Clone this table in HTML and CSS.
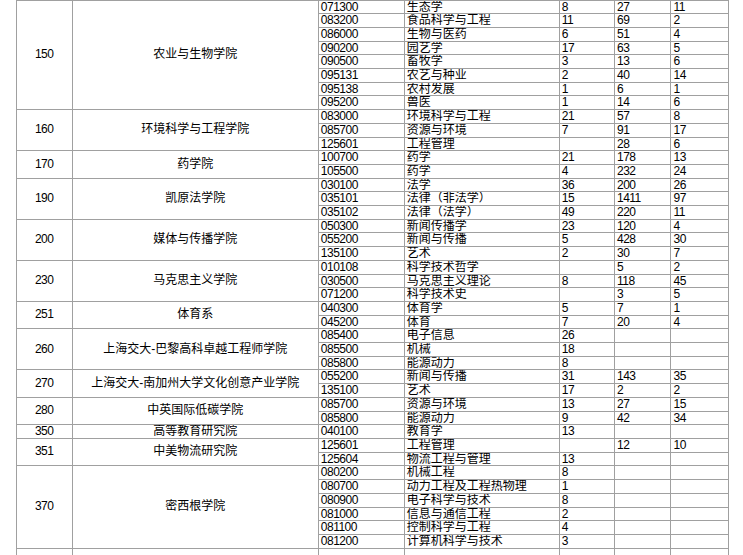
FILE: index.html
```html
<!DOCTYPE html>
<html lang="zh-CN">
<head>
<meta charset="utf-8">
<title>招生专业目录</title>
<link rel="stylesheet" href="styles.css">
</head>
<body>
<table class="sheet">
  <colgroup>
    <col class="c-code"><col class="c-school"><col class="c-major"><col class="c-name"><col class="c-num"><col class="c-num2"><col class="c-num3">
  </colgroup>
  <tbody>
    <tr><td class="grp" rowspan="8">150</td><td class="school" rowspan="8">农业与生物学院</td><td class="n">071300</td><td>生态学</td><td class="n">8</td><td class="n">27</td><td class="n">11</td></tr>
    <tr><td class="n">083200</td><td>食品科学与工程</td><td class="n">11</td><td class="n">69</td><td class="n">2</td></tr>
    <tr><td class="n">086000</td><td>生物与医药</td><td class="n">6</td><td class="n">51</td><td class="n">4</td></tr>
    <tr><td class="n">090200</td><td>园艺学</td><td class="n">17</td><td class="n">63</td><td class="n">5</td></tr>
    <tr><td class="n">090500</td><td>畜牧学</td><td class="n">3</td><td class="n">13</td><td class="n">6</td></tr>
    <tr><td class="n">095131</td><td>农艺与种业</td><td class="n">2</td><td class="n">40</td><td class="n">14</td></tr>
    <tr><td class="n">095138</td><td>农村发展</td><td class="n">1</td><td class="n">6</td><td class="n">1</td></tr>
    <tr><td class="n">095200</td><td>兽医</td><td class="n">1</td><td class="n">14</td><td class="n">6</td></tr>

    <tr><td class="grp" rowspan="3">160</td><td class="school" rowspan="3">环境科学与工程学院</td><td class="n">083000</td><td>环境科学与工程</td><td class="n">21</td><td class="n">57</td><td class="n">8</td></tr>
    <tr><td class="n">085700</td><td>资源与环境</td><td class="n">7</td><td class="n">91</td><td class="n">17</td></tr>
    <tr><td class="n">125601</td><td>工程管理</td><td class="n"></td><td class="n">28</td><td class="n">6</td></tr>

    <tr><td class="grp" rowspan="2">170</td><td class="school" rowspan="2">药学院</td><td class="n">100700</td><td>药学</td><td class="n">21</td><td class="n">178</td><td class="n">13</td></tr>
    <tr><td class="n">105500</td><td>药学</td><td class="n">4</td><td class="n">232</td><td class="n">24</td></tr>

    <tr><td class="grp" rowspan="3">190</td><td class="school" rowspan="3">凯原法学院</td><td class="n">030100</td><td>法学</td><td class="n">36</td><td class="n">200</td><td class="n">26</td></tr>
    <tr><td class="n">035101</td><td>法律（非法学）</td><td class="n">15</td><td class="n">1411</td><td class="n">97</td></tr>
    <tr><td class="n">035102</td><td>法律（法学）</td><td class="n">49</td><td class="n">220</td><td class="n">11</td></tr>

    <tr><td class="grp" rowspan="3">200</td><td class="school" rowspan="3">媒体与传播学院</td><td class="n">050300</td><td>新闻传播学</td><td class="n">23</td><td class="n">120</td><td class="n">4</td></tr>
    <tr><td class="n">055200</td><td>新闻与传播</td><td class="n">5</td><td class="n">428</td><td class="n">30</td></tr>
    <tr><td class="n">135100</td><td>艺术</td><td class="n">2</td><td class="n">30</td><td class="n">7</td></tr>

    <tr><td class="grp" rowspan="3">230</td><td class="school" rowspan="3">马克思主义学院</td><td class="n">010108</td><td>科学技术哲学</td><td class="n"></td><td class="n">5</td><td class="n">2</td></tr>
    <tr><td class="n">030500</td><td>马克思主义理论</td><td class="n">8</td><td class="n">118</td><td class="n">45</td></tr>
    <tr><td class="n">071200</td><td>科学技术史</td><td class="n"></td><td class="n">3</td><td class="n">5</td></tr>

    <tr><td class="grp" rowspan="2">251</td><td class="school" rowspan="2">体育系</td><td class="n">040300</td><td>体育学</td><td class="n">5</td><td class="n">7</td><td class="n">1</td></tr>
    <tr><td class="n">045200</td><td>体育</td><td class="n">7</td><td class="n">20</td><td class="n">4</td></tr>

    <tr><td class="grp" rowspan="3">260</td><td class="school" rowspan="3">上海交大-巴黎高科卓越工程师学院</td><td class="n">085400</td><td>电子信息</td><td class="n">26</td><td class="n"></td><td class="n"></td></tr>
    <tr><td class="n">085500</td><td>机械</td><td class="n">18</td><td class="n"></td><td class="n"></td></tr>
    <tr><td class="n">085800</td><td>能源动力</td><td class="n">8</td><td class="n"></td><td class="n"></td></tr>

    <tr><td class="grp" rowspan="2">270</td><td class="school" rowspan="2">上海交大-南加州大学文化创意产业学院</td><td class="n">055200</td><td>新闻与传播</td><td class="n">31</td><td class="n">143</td><td class="n">35</td></tr>
    <tr><td class="n">135100</td><td>艺术</td><td class="n">17</td><td class="n">2</td><td class="n">2</td></tr>

    <tr><td class="grp" rowspan="2">280</td><td class="school" rowspan="2">中英国际低碳学院</td><td class="n">085700</td><td>资源与环境</td><td class="n">13</td><td class="n">27</td><td class="n">15</td></tr>
    <tr><td class="n">085800</td><td>能源动力</td><td class="n">9</td><td class="n">42</td><td class="n">34</td></tr>

    <tr><td class="grp">350</td><td class="school">高等教育研究院</td><td class="n">040100</td><td>教育学</td><td class="n">13</td><td class="n"></td><td class="n"></td></tr>

    <tr><td class="grp" rowspan="2">351</td><td class="school" rowspan="2">中美物流研究院</td><td class="n">125601</td><td>工程管理</td><td class="n"></td><td class="n">12</td><td class="n">10</td></tr>
    <tr><td class="n">125604</td><td>物流工程与管理</td><td class="n">13</td><td class="n"></td><td class="n"></td></tr>

    <tr><td class="grp" rowspan="6">370</td><td class="school" rowspan="6">密西根学院</td><td class="n">080200</td><td>机械工程</td><td class="n">8</td><td class="n"></td><td class="n"></td></tr>
    <tr><td class="n">080700</td><td>动力工程及工程热物理</td><td class="n">1</td><td class="n"></td><td class="n"></td></tr>
    <tr><td class="n">080900</td><td>电子科学与技术</td><td class="n">8</td><td class="n"></td><td class="n"></td></tr>
    <tr><td class="n">081000</td><td>信息与通信工程</td><td class="n">2</td><td class="n"></td><td class="n"></td></tr>
    <tr><td class="n">081100</td><td>控制科学与工程</td><td class="n">4</td><td class="n"></td><td class="n"></td></tr>
    <tr><td class="n">081200</td><td>计算机科学与技术</td><td class="n">3</td><td class="n"></td><td class="n"></td></tr>

    <tr class="cut"><td></td><td></td><td></td><td></td><td></td><td></td><td></td></tr>
  </tbody>
</table>
</body>
</html>
```

FILE: styles.css
```css
html, body {
  margin: 0;
  padding: 0;
  background: #ffffff;
  overflow: hidden;
}

.sheet {
  margin-left: 15.5px;
  margin-top: -0.5px;
  border-collapse: collapse;
  table-layout: fixed;
  width: 712.8px;
  font-family: "Liberation Sans", "Noto Sans CJK SC", sans-serif;
  font-size: 12px;
  color: #000000;
}

.c-code { width: 56.3px; }
.c-school { width: 246px; }
.c-major { width: 86px; }
.c-name { width: 155px; }
.c-num { width: 55.2px; }
.c-num2 { width: 56.5px; }
.c-num3 { width: 57.3px; }

.sheet tr {
  height: 13.7px;
}

.sheet td {
  border: 1px solid #a0a0a0;
  padding: 1px 0 0 2px;
  line-height: 11.7px;
  height: 11.7px;
  vertical-align: middle;
  white-space: nowrap;
  overflow: hidden;
}

.sheet td.n {
  letter-spacing: -0.5px;
}

.sheet td.grp,
.sheet td.school {
  text-align: center;
  padding: 0;
}

.sheet td.grp {
  letter-spacing: -0.5px;
}
```
